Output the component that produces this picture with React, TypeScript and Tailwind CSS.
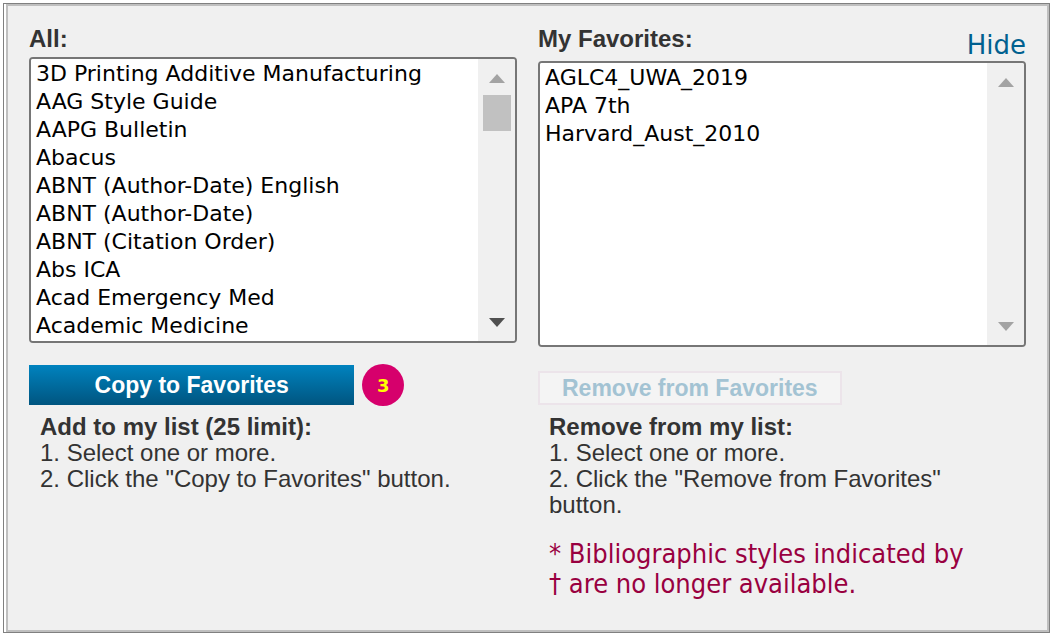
import { useState } from 'react';

const ALL_STYLES = [
  '3D Printing Additive Manufacturing',
  'AAG Style Guide',
  'AAPG Bulletin',
  'Abacus',
  'ABNT (Author-Date) English',
  'ABNT (Author-Date)',
  'ABNT (Citation Order)',
  'Abs ICA',
  'Acad Emergency Med',
  'Academic Medicine',
];

const FAVORITES = ['AGLC4_UWA_2019', 'APA 7th', 'Harvard_Aust_2010'];

interface StyleListProps {
  id: string;
  items: string[];
  selected: string[];
  onSelect: (items: string[]) => void;
  scrollable?: boolean;
}

function StyleList({ id, items, selected, onSelect, scrollable = false }: StyleListProps) {
  return (
    <div className="flex h-[286px] overflow-hidden rounded-[4px] border-2 border-[#767676] bg-white">
      <select
        id={id}
        multiple
        className="h-full min-w-0 flex-1 overflow-hidden bg-white px-[5px] pt-[2px] font-['DejaVu_Sans',Verdana,sans-serif] text-[22px] text-black outline-none [scrollbar-width:none]"
        value={selected}
        onChange={(e) => onSelect(Array.from(e.target.selectedOptions, (o) => o.value))}
      >
        {items.map((item) => (
          <option key={item} className="h-7 p-0 leading-7" value={item}>
            {item}
          </option>
        ))}
      </select>
      <div className="flex w-[37px] flex-col items-center bg-[#f0f0f0] pt-[15px] pb-[14px]" aria-hidden="true">
        <svg width="16" height="9" viewBox="0 0 16 9" fill="#a3a3a3">
          <path d="M0 9 8 0l8 9z" />
        </svg>
        {scrollable && <div className="mt-3 h-9 w-7 bg-[#c1c1c1]" />}
        <svg className="mt-auto" width="16" height="9" viewBox="0 0 16 9" fill={scrollable ? '#505050' : '#a3a3a3'}>
          <path d="M0 0 8 9l8-9z" />
        </svg>
      </div>
    </div>
  );
}

export default function App() {
  const [picked, setPicked] = useState<string[]>([]);
  const [favPicked, setFavPicked] = useState<string[]>([]);

  return (
    <div className="min-h-screen bg-white p-[3px] font-['Liberation_Sans',Arial,sans-serif] text-[#333]">
      <div className="border border-[#808080] bg-white pl-[2px]">
        <main className="grid min-h-[628px] grid-cols-2 gap-[21px] border-2 border-[#bfbfbf] bg-[#f0f0f0] pt-[18px] pr-[21px] pb-5 pl-[21px]">
          <section>
            <label htmlFor="all-styles" className="block h-[33px] text-[24px] leading-[30px] font-bold">
              All:
            </label>
            <StyleList id="all-styles" items={ALL_STYLES} selected={picked} onSelect={setPicked} scrollable />
            <div className="mt-[21px] flex items-center gap-2">
              <button
                type="button"
                className="h-10 w-2/3 bg-linear-to-b from-[#0083bf] to-[#005580] text-[23px] font-bold text-white"
              >
                Copy to Favorites
              </button>
              <span className="flex size-[42px] items-center justify-center rounded-full bg-[#d6006c] font-['DejaVu_Sans',Verdana,sans-serif] text-[18px] font-bold text-[#ffff00]">
                3
              </span>
            </div>
            <div className="mt-2 px-[11px] text-[24px] leading-[26px]">
              <h2 className="font-bold">Add to my list (25 limit):</h2>
              <p>1. Select one or more.</p>
              <p>2. Click the "Copy to Favorites" button.</p>
            </div>
          </section>

          <section>
            <div className="flex h-[37px] justify-between">
              <label htmlFor="my-favorites" className="text-[24px] leading-[30px] font-bold">
                My Favorites:
              </label>
              <a
                href="#hide"
                className="mt-1 font-['DejaVu_Sans',Verdana,sans-serif] text-[26px] leading-[34px] text-[#00608f]"
              >
                Hide
              </a>
            </div>
            <StyleList id="my-favorites" items={FAVORITES} selected={favPicked} onSelect={setFavPicked} />
            <button
              type="button"
              disabled={favPicked.length === 0}
              className="mt-6 block h-[34px] border-2 border-[#ece4ea] bg-[#f4f4f4] px-[22px] text-[23px] leading-[30px] font-bold text-[#a3c3d3]"
            >
              Remove from Favorites
            </button>
            <div className="mt-[9px] px-[11px] text-[24px] leading-[26px]">
              <h2 className="font-bold">Remove from my list:</h2>
              <p>1. Select one or more.</p>
              <p>2. Click the "Remove from Favorites" button.</p>
            </div>
            <p className="mt-[21px] px-[11px] font-['DejaVu_Sans_Condensed',Tahoma,sans-serif] text-[27px] leading-[30px] text-[#990040]">
              * Bibliographic styles indicated by
              <br />† are no longer available.
            </p>
          </section>
        </main>
      </div>
    </div>
  );
}
